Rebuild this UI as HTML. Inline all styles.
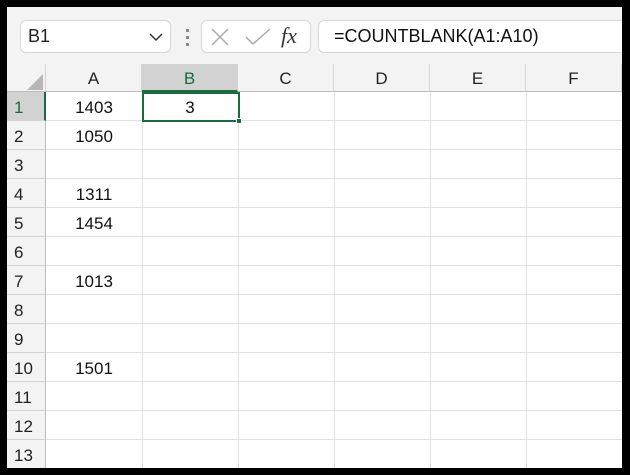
<!DOCTYPE html>
<html><head><style>
*{margin:0;padding:0;box-sizing:border-box}
body{width:630px;height:475px;background:#000;position:relative;overflow:hidden;font-family:"Liberation Sans",sans-serif}
#app{position:absolute;left:7px;top:7px;width:615px;height:461px;background:#fff;overflow:hidden}
.tb{position:absolute;left:0;top:0;width:615px;height:57px;background:#f3f3f3}
.box{position:absolute;background:#fff;border:1px solid #d6d6d6;border-radius:6px}
.ch{position:absolute;top:57px;height:28px;background:#f3f3f3;border-right:1px solid #d4d4d4;border-bottom:1px solid #bdbdbd;font-size:17px;color:#222;text-align:center;line-height:28px}
.ch span{position:relative;top:1px}
.rh{position:absolute;left:0;width:39px;height:29px;background:#f3f3f3;border-bottom:1px solid #d4d4d4;border-right:1px solid #bdbdbd;font-size:17px;color:#222;padding-left:7px;padding-top:2px;line-height:28px}
.hl{position:absolute;left:39px;width:576px;height:1px;background:#e0e0e0}
.vl{position:absolute;top:85px;width:1px;height:400px;background:#e0e0e0}
.c{position:absolute;width:96px;text-align:center;font-size:17px;color:#111;line-height:28px;height:29px;padding-top:2px}
</style></head><body><div id="app">
<div class="tb"></div>
<div class="box" style="left:13px;top:13px;width:151px;height:33px"></div>
<div style="position:absolute;left:21px;top:19px;font-size:18px;color:#222">B1</div>
<svg style="position:absolute;left:142px;top:26px" width="14" height="9"><path d="M1 1 L7 7 L13 1" fill="none" stroke="#333" stroke-width="1.5"/></svg>
<div style="position:absolute;left:179px;top:22px;width:3px;height:3px;background:#888"></div>
<div style="position:absolute;left:179px;top:29px;width:3px;height:3px;background:#888"></div>
<div style="position:absolute;left:179px;top:36px;width:3px;height:3px;background:#888"></div>
<div class="box" style="left:194px;top:13px;width:110px;height:33px"></div>
<svg style="position:absolute;left:204px;top:20px" width="90" height="20"><path d="M1 2 L17 18 M17 2 L1 18" stroke="#aaa" stroke-width="1.5"/><path d="M35 10 L42 17 L59 2" fill="none" stroke="#aaa" stroke-width="1.5"/></svg>
<div style="position:absolute;left:274px;top:16px;font-family:'Liberation Serif',serif;font-style:italic;font-size:22px;color:#333">fx</div>
<div class="box" style="left:311px;top:13px;width:320px;height:33px"></div>
<div style="position:absolute;left:327px;top:19px;font-size:18px;color:#111">=COUNTBLANK(A1:A10)</div>
<div class="ch" style="left:0;width:39px;background:#f3f3f3"></div>
<svg style="position:absolute;left:20px;top:67px" width="16" height="16"><path d="M16 0 L16 16 L0 16Z" fill="#b7b7b7"/></svg>
<div class="ch" style="left:39px;width:96px"><span>A</span></div>
<div class="ch" style="left:135px;width:96px;background:#d2d2d2;color:#1e6a3f;border-bottom:2px solid #1e6a3f"><span>B</span></div>
<div class="ch" style="left:231px;width:96px"><span>C</span></div>
<div class="ch" style="left:327px;width:96px"><span>D</span></div>
<div class="ch" style="left:423px;width:96px"><span>E</span></div>
<div class="ch" style="left:519px;width:96px"><span>F</span></div>
<div class="vl" style="left:135px"></div><div class="vl" style="left:231px"></div><div class="vl" style="left:327px"></div><div class="vl" style="left:423px"></div><div class="vl" style="left:519px"></div>
<div class="rh" style="top:85px;background:#d2d2d2;color:#1e6a3f;border-right:2px solid #1e6a3f">1</div><div class="hl" style="top:113px"></div>
<div class="rh" style="top:114px">2</div><div class="hl" style="top:142px"></div>
<div class="rh" style="top:143px">3</div><div class="hl" style="top:171px"></div>
<div class="rh" style="top:172px">4</div><div class="hl" style="top:200px"></div>
<div class="rh" style="top:201px">5</div><div class="hl" style="top:229px"></div>
<div class="rh" style="top:230px">6</div><div class="hl" style="top:258px"></div>
<div class="rh" style="top:259px">7</div><div class="hl" style="top:287px"></div>
<div class="rh" style="top:288px">8</div><div class="hl" style="top:316px"></div>
<div class="rh" style="top:317px">9</div><div class="hl" style="top:345px"></div>
<div class="rh" style="top:346px">10</div><div class="hl" style="top:374px"></div>
<div class="rh" style="top:375px">11</div><div class="hl" style="top:403px"></div>
<div class="rh" style="top:404px">12</div><div class="hl" style="top:432px"></div>
<div class="rh" style="top:433px">13</div>
<div class="c" style="left:39px;top:85px">1403</div>
<div class="c" style="left:39px;top:114px">1050</div>
<div class="c" style="left:39px;top:172px">1311</div>
<div class="c" style="left:39px;top:201px">1454</div>
<div class="c" style="left:39px;top:259px">1013</div>
<div class="c" style="left:39px;top:346px">1501</div>
<div style="position:absolute;left:135px;top:85px;width:98px;height:30px;border:2px solid #1e6a3f"></div>
<div style="position:absolute;left:229px;top:111px;width:6px;height:6px;background:#1e6a3f;border:1px solid #fff"></div>
<div class="c" style="left:135px;top:85px">3</div>
</div></body></html>
